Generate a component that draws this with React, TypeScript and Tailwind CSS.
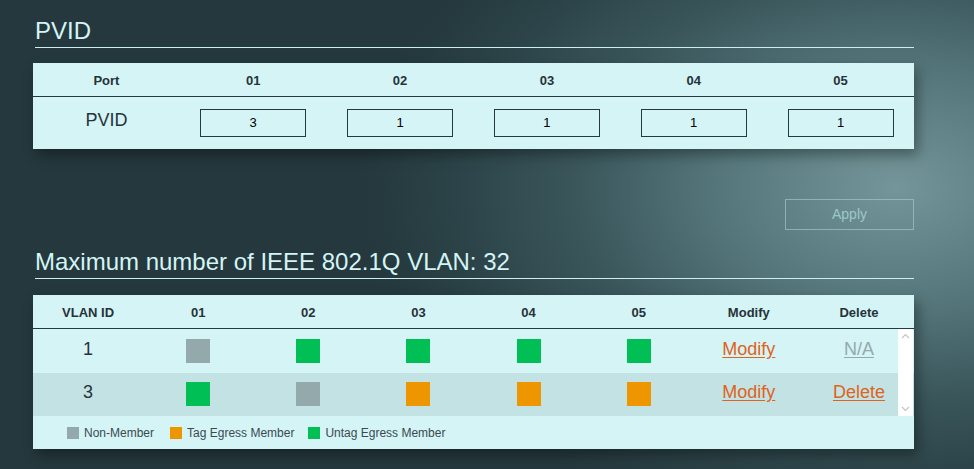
const ports = ['01', '02', '03', '04', '05']
const pvids = ['3', '1', '1', '1', '1']

type Member = 'none' | 'tag' | 'untag'
const vlans: { id: string; members: Member[]; canDelete: boolean }[] = [
  { id: '1', members: ['none', 'untag', 'untag', 'untag', 'untag'], canDelete: false },
  { id: '3', members: ['untag', 'none', 'tag', 'tag', 'tag'], canDelete: true },
]

const swatch: Record<Member, string> = {
  none: 'bg-[#94a9ab]',
  tag: 'bg-[#ee9600]',
  untag: 'bg-[#00bf55]',
}

function Heading({ children }: { children: React.ReactNode }) {
  return (
    <div className="ml-[2px] pb-[2px] border-b border-[#cdeef0] text-[24px] leading-[28px] text-[#d4f4f6]">
      {children}
    </div>
  )
}

export default function App() {
  return (
    <div
      className="w-[974px] h-[469px] overflow-hidden px-[33px] pt-[17px] text-[#263238] bg-[radial-gradient(ellipse_55%_75%_at_92%_40%,#749599_0%,#587a7e_30%,#3a565b_60%,#2a4146_85%,#24383d_100%)]"
      style={{ fontFamily: '"Liberation Sans", Arial, sans-serif' }}
    >
      <div className="w-[881px]">
        <Heading>PVID</Heading>

        <div className="mt-[15px] bg-[#d4f4f6] shadow-[4px_6px_12px_rgba(0,0,0,0.35)]">
          <div className="grid grid-cols-6 h-[34px] pt-[3px] items-center border-b-[1.5px] border-[#243a40] text-[13px] font-bold text-center">
            <div>Port</div>
            {ports.map((p) => (
              <div key={p}>{p}</div>
            ))}
          </div>
          <div className="grid grid-cols-6 h-[52px] items-center text-center">
            <div className="text-[18px] -mt-[6px]">PVID</div>
            {pvids.map((v, i) => (
              <div key={i} className="flex justify-center">
                <div className="w-[106px] h-[28px] border-[1.5px] border-[#243a40] flex items-center justify-center text-[13px] text-black">
                  {v}
                </div>
              </div>
            ))}
          </div>
        </div>

        <div className="flex justify-end mt-[50px]">
          <button className="w-[129px] h-[31px] border border-[#9cc8cc]/70 text-[14px] text-[#9cc8cc]">Apply</button>
        </div>

        <div className="mt-[18px]">
          <Heading>Maximum number of IEEE 802.1Q VLAN: 32</Heading>
        </div>

        <div className="mt-[16px] bg-[#d4f4f6] shadow-[4px_6px_12px_rgba(0,0,0,0.35)]">
          <div className="grid grid-cols-8 h-[34px] pt-[2px] items-center border-b-[1.5px] border-[#243a40] text-[13px] font-bold text-center">
            <div>VLAN ID</div>
            {ports.map((p) => (
              <div key={p}>{p}</div>
            ))}
            <div>Modify</div>
            <div>Delete</div>
          </div>

          <div className="relative">
            {vlans.map((v, r) => (
              <div key={v.id} className={`grid grid-cols-8 h-[43.5px] items-center text-center ${r === 1 ? 'bg-[#c2e2e3]' : ''}`}>
                <div className="text-[18px] -mt-[3px]">{v.id}</div>
                {v.members.map((m, i) => (
                  <div key={i} className="flex justify-center">
                    <div className={`w-[24px] h-[24px] ${swatch[m]}`} />
                  </div>
                ))}
                <div className="text-[18px] -mt-[3px]">
                  <span className="underline underline-offset-2 text-[#e0621b]">Modify</span>
                </div>
                <div className="text-[18px] -mt-[3px]">
                  <span className={`underline underline-offset-2 ${v.canDelete ? 'text-[#e0621b]' : 'text-[#94a9ab]'}`}>
                    {v.canDelete ? 'Delete' : 'N/A'}
                  </span>
                </div>
              </div>
            ))}
            <div className="absolute right-[1px] top-0 bottom-0 w-[15px] bg-white flex flex-col items-center justify-between py-[2px] text-[#c4c4c4]">
              <svg width="9" height="6" viewBox="0 0 9 6" className="mt-[2px]">
                <path d="M1 5 L4.5 1.5 L8 5" fill="none" stroke="currentColor" strokeWidth="1.2" />
              </svg>
              <svg width="9" height="6" viewBox="0 0 9 6" className="mb-[2px]">
                <path d="M1 1 L4.5 4.5 L8 1" fill="none" stroke="currentColor" strokeWidth="1.2" />
              </svg>
            </div>
          </div>

          <div className="h-[33px] flex items-center pl-[34px] text-[12px] text-[#3a4a50]">
            <span className="w-[12px] h-[12px] bg-[#94a9ab] mr-[5px]" />
            <span>Non-Member</span>
            <span className="w-[12px] h-[12px] bg-[#ee9600] ml-[16px] mr-[5px]" />
            <span>Tag Egress Member</span>
            <span className="w-[12px] h-[12px] bg-[#00bf55] ml-[14px] mr-[5px]" />
            <span>Untag Egress Member</span>
          </div>
        </div>
      </div>
    </div>
  )
}
